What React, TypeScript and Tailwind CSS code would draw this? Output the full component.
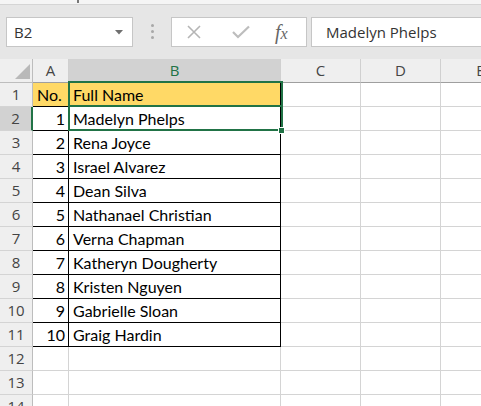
import React from "react";

const names = [
  "Madelyn Phelps",
  "Rena Joyce",
  "Israel Alvarez",
  "Dean Silva",
  "Nathanael Christian",
  "Verna Chapman",
  "Katheryn Dougherty",
  "Kristen Nguyen",
  "Gabrielle Sloan",
  "Graig Hardin",
];

const cellFont = { fontFamily: "Lato, 'Noto Sans', sans-serif" };
const uiFont = { fontFamily: "'Open Sans', 'Noto Sans', sans-serif" };

function RowHeader({ n, selected }: { n: number; selected?: boolean }) {
  return (
    <div
      className={
        "h-[24px] flex items-center justify-center border-b border-[#d4d4d4] text-[15px] text-[#444] " +
        (selected
          ? "bg-[#d2d2d2] border-r-2 border-r-[#217346]"
          : "bg-[#efefef] border-r border-r-[#bdbdbd]")
      }
      style={uiFont}
    >
      {n}
    </div>
  );
}

export default function App() {
  const rows = Array.from({ length: 14 }, (_, i) => i + 1);
  return (
    <div className="w-[481px] h-[406px] overflow-hidden bg-white relative">
      {/* top strip */}
      <div className="h-[5px] bg-[#f5f5f5] border-b border-[#d5d5d5] relative">
        <div className="absolute left-[77px] top-0 w-[2px] h-[3px] bg-[#777]" />
      </div>
      {/* formula bar */}
      <div className="h-[54px] bg-[#e6e6e6] flex items-start pt-[12px]">
        <div className="ml-[6px] w-[127px] h-[30px] bg-white border border-[#c6c6c6] flex items-center justify-between pl-[7px] pr-[9px]">
          <span className="text-[15px] text-[#333]" style={uiFont}>
            B2
          </span>
          <svg width="8" height="5" viewBox="0 0 8 5">
            <polygon points="0,0 8,0 4,4.5" fill="#6f6f6f" />
          </svg>
        </div>
        <div className="ml-[18px] mt-[7px] flex flex-col gap-[3px]">
          <div className="w-[3px] h-[3px] bg-[#a8a8a8] rounded-full" />
          <div className="w-[3px] h-[3px] bg-[#a8a8a8] rounded-full" />
          <div className="w-[3px] h-[3px] bg-[#a8a8a8] rounded-full" />
        </div>
        <div className="ml-[17px] w-[136px] h-[30px] bg-white border border-[#c6c6c6] flex items-center">
          <svg className="ml-[14px]" width="16" height="16" viewBox="0 0 16 16">
            <path d="M2 2 L14 14 M14 2 L2 14" stroke="#b5b5b5" strokeWidth="1.6" fill="none" />
          </svg>
          <svg className="ml-[30px]" width="18" height="14" viewBox="0 0 18 14">
            <path d="M1 7 L6 12 L17 1.5" stroke="#bdbdbd" strokeWidth="2.2" fill="none" />
          </svg>
          <span
            className="ml-[25px] text-[20px] italic text-[#666] leading-none"
            style={{ fontFamily: "'Liberation Serif', serif" }}
          >
            f<span className="text-[16px]">x</span>
          </span>
        </div>
        <div className="ml-[4px] flex-1 h-[30px] bg-white border border-[#c6c6c6] border-r-0 flex items-center pl-[14px]">
          <span className="text-[15px] text-[#333]" style={uiFont}>
            Madelyn Phelps
          </span>
        </div>
      </div>
      {/* grid */}
      <div className="relative">
        <div className="grid grid-cols-[33px_36px_212px_80px_80px_80px]">
          {/* header row */}
          <div className="h-[24px] bg-[#efefef] border-r border-b border-[#bdbdbd] relative">
            <svg className="absolute left-0 top-0" width="33" height="24" viewBox="0 0 33 24">
              <polygon points="15,20 30,20 30,5" fill="#b9b9b9" />
            </svg>
          </div>
          {["A", "B", "C", "D", "E"].map((c) => (
            <div
              key={c}
              className={
                "h-[24px] flex items-center justify-center text-[15px] border-r border-r-[#d0d0d0] " +
                (c === "B"
                  ? "bg-[#d2d2d2] text-[#217346] border-b-2 border-b-[#217346]"
                  : "bg-[#efefef] text-[#444] border-b border-b-[#9f9f9f]")
              }
              style={uiFont}
            >
              {c}
            </div>
          ))}
          {rows.map((r) => {
            const inTable = r <= 11;
            const isHead = r === 1;
            const cellBase =
              "h-[24px] flex items-center text-[16px] text-black border-b border-r ";
            const tb = inTable ? "border-black " : "border-[#d4d4d4] ";
            const fill = isHead ? "bg-[#ffd966] " : "bg-white ";
            return (
              <React.Fragment key={r}>
                <RowHeader n={r} selected={r === 2} />
                <div className={cellBase + tb + fill + "justify-end pr-[3px]"} style={cellFont}>
                  {isHead ? <span className="w-full pl-[4px]">No.</span> : inTable ? r - 1 : ""}
                </div>
                <div className={cellBase + tb + fill + "pl-[4px]"} style={cellFont}>
                  {isHead ? "Full Name" : inTable ? names[r - 2] : ""}
                </div>
                <div className={cellBase + "border-[#d4d4d4] bg-white"} />
                <div className={cellBase + "border-[#d4d4d4] bg-white"} />
                <div className={cellBase + "border-[#d4d4d4] bg-white"} />
              </React.Fragment>
            );
          })}
        </div>
        {/* selection overlay */}
        <div className="absolute left-[68px] top-[22px] w-[215px] h-[50px] border-2 border-[#217346] pointer-events-none" />
        <div className="absolute left-[68px] top-[46px] w-[215px] h-[2px] bg-[#217346]" />
        <div className="absolute left-[278px] top-[68px] w-[7px] h-[7px] bg-[#217346] border border-white" />
      </div>
    </div>
  );
}
